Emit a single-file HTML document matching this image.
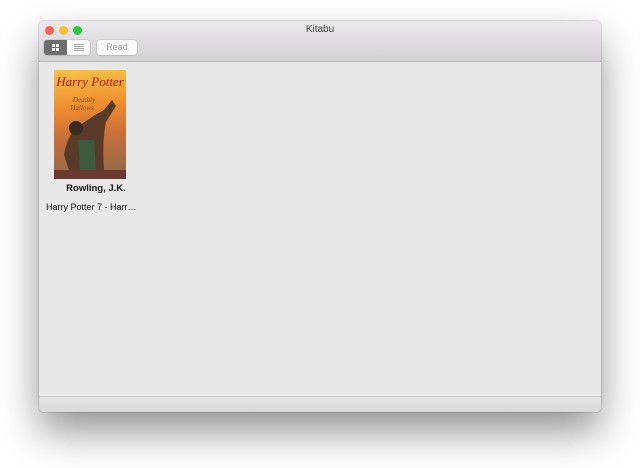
<!DOCTYPE html>
<html><head><meta charset="utf-8"><style>
html,body{margin:0;padding:0;background:#fff;width:640px;height:468px;overflow:hidden;font-family:"Liberation Sans",sans-serif;}
.win{position:absolute;left:39px;top:21px;width:562px;height:391px;background:#e8e8e8;border-radius:5px;box-shadow:0 20px 40px rgba(0,0,0,0.42),0 0 0 1px rgba(0,0,0,0.12);overflow:hidden;}
.tb{position:absolute;left:0;top:0;width:100%;height:40px;background:linear-gradient(#ebe9eb,#d3d1d3);border-bottom:1px solid #b8b8b8;}
.dot{position:absolute;top:5px;width:9px;height:9px;border-radius:50%;}
.title{position:absolute;top:3px;width:100%;text-align:center;font-size:10px;color:#444;}
.seg{position:absolute;left:5px;top:19px;width:46px;height:15px;border-radius:3px;background:#fbfbfb;box-shadow:0 0 0 0.5px #bbb,0 1px 1px rgba(0,0,0,.15);overflow:hidden;}
.seg .on{position:absolute;left:0;top:0;width:23px;height:15px;background:#6e6e6e;}
.read{position:absolute;left:58px;top:19px;width:40px;height:15px;border-radius:3px;background:#fbfbfb;box-shadow:0 0 0 0.5px #bbb,0 1px 1px rgba(0,0,0,.15);font-size:9px;color:#999;text-align:center;line-height:15px;}
.bot{position:absolute;left:0;bottom:0;width:100%;height:15px;background:linear-gradient(#e4e4e4,#d9d9d9);border-top:1px solid #c8c8c8;}
.cover{position:absolute;left:15px;top:49px;width:72px;height:109px;background:linear-gradient(175deg,#f7c24a 0%,#ee8b2c 35%,#c86e3a 60%,#8a6a4e 100%);overflow:hidden;}
.author{position:absolute;left:0;top:162px;width:114px;text-align:center;font-size:9.5px;font-weight:bold;color:#111;}
.btitle{position:absolute;left:7px;top:181px;font-size:9px;color:#111;}
</style></head><body>
<div class="win">
 <div class="tb">
  <div class="dot" style="left:6px;background:#fc5f57;"></div>
  <div class="dot" style="left:20px;background:#fdbc2e;"></div>
  <div class="dot" style="left:34px;background:#28c840;"></div>
  <div class="title">Kitabu</div>
  <div class="seg"><div class="on"></div>
   <svg style="position:absolute;left:8px;top:4px" width="7" height="7"><rect x="0" y="0" width="3" height="3" fill="#fff"/><rect x="4" y="0" width="3" height="3" fill="#fff"/><rect x="0" y="4" width="3" height="3" fill="#fff"/><rect x="4" y="4" width="3" height="3" fill="#fff"/></svg>
   <svg style="position:absolute;left:30px;top:4px" width="10" height="8"><g stroke="#888" stroke-width="0.8"><line x1="0" y1="0.5" x2="10" y2="0.5"/><line x1="0" y1="2.5" x2="10" y2="2.5"/><line x1="0" y1="4.5" x2="10" y2="4.5"/><line x1="0" y1="6.5" x2="10" y2="6.5"/></g></svg>
  </div>
  <div class="read">Read</div>
 </div>
 <div class="cover">
  <svg width="72" height="109" style="position:absolute;left:0;top:0">
   <text x="36" y="16" text-anchor="middle" font-family="Liberation Serif" font-size="13" fill="#b01a10" font-style="italic">Harry Potter</text>
   <text x="30" y="32" text-anchor="middle" font-family="Liberation Serif" font-size="7" fill="#9a4a20" font-style="italic">Deathly</text>
   <text x="28" y="40" text-anchor="middle" font-family="Liberation Serif" font-size="7" fill="#9a4a20" font-style="italic">Hallows</text>
   <path d="M20 60 Q35 48 50 40 L58 30 L62 36 L52 52 Q48 70 50 100 L18 109 L10 85 Q12 70 20 60Z" fill="#5a3a28"/>
   <circle cx="22" cy="58" r="7" fill="#3b2a20"/>
   <path d="M24 70 L40 70 L42 100 L26 100Z" fill="#3e5a40"/>
   <rect x="0" y="100" width="72" height="9" fill="#6a3a30"/>
  </svg>
 </div>
 <div class="author">Rowling, J.K.</div>
 <div class="btitle">Harry Potter 7 - Harr…</div>
 <div class="bot"></div>
</div>
</body></html>
